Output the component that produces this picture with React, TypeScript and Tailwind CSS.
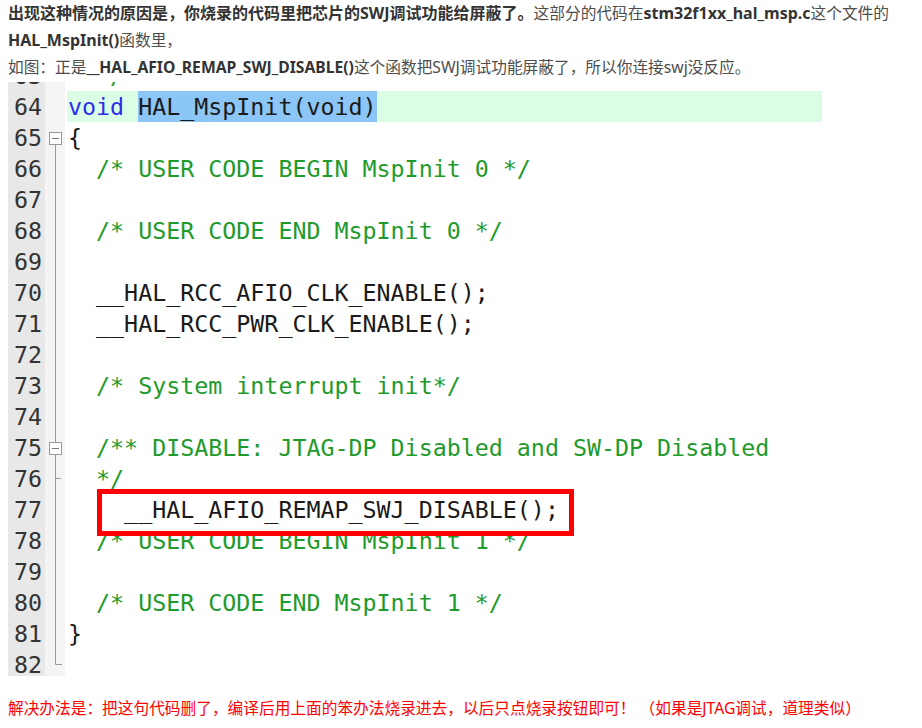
import React from "react";

type Fold = "none" | "open" | "bar" | "mid" | "tick" | "end";
type Kind = "plain" | "comment" | "sig";

const CODE: { n: number; fold: Fold; kind: Kind; text: string }[] = [
  { n: 63, fold: "none", kind: "comment", text: "  */" },
  { n: 64, fold: "none", kind: "sig", text: "" },
  { n: 65, fold: "open", kind: "plain", text: "{" },
  { n: 66, fold: "bar", kind: "comment", text: "  /* USER CODE BEGIN MspInit 0 */" },
  { n: 67, fold: "bar", kind: "plain", text: "" },
  { n: 68, fold: "bar", kind: "comment", text: "  /* USER CODE END MspInit 0 */" },
  { n: 69, fold: "bar", kind: "plain", text: "" },
  { n: 70, fold: "bar", kind: "plain", text: "  __HAL_RCC_AFIO_CLK_ENABLE();" },
  { n: 71, fold: "bar", kind: "plain", text: "  __HAL_RCC_PWR_CLK_ENABLE();" },
  { n: 72, fold: "bar", kind: "plain", text: "" },
  { n: 73, fold: "bar", kind: "comment", text: "  /* System interrupt init*/" },
  { n: 74, fold: "bar", kind: "plain", text: "" },
  { n: 75, fold: "mid", kind: "comment", text: "  /** DISABLE: JTAG-DP Disabled and SW-DP Disabled" },
  { n: 76, fold: "tick", kind: "comment", text: "  */" },
  { n: 77, fold: "bar", kind: "plain", text: "    __HAL_AFIO_REMAP_SWJ_DISABLE();" },
  { n: 78, fold: "bar", kind: "comment", text: "  /* USER CODE BEGIN MspInit 1 */" },
  { n: 79, fold: "bar", kind: "plain", text: "" },
  { n: 80, fold: "bar", kind: "comment", text: "  /* USER CODE END MspInit 1 */" },
  { n: 81, fold: "bar", kind: "plain", text: "}" },
  { n: 82, fold: "end", kind: "plain", text: "" },
];

function FoldMark({ type }: { type: Fold }) {
  const c = "#9a9a9a";
  return (
    <svg width="20" height="31" viewBox="0 0 20 31" className="block">
      {(type === "bar" || type === "tick") && <line x1="10.5" y1="0" x2="10.5" y2="31" stroke={c} />}
      {type === "tick" && <line x1="10.5" y1="15.5" x2="16" y2="15.5" stroke={c} />}
      {type === "end" && (
        <polyline points="10.5,0 10.5,15.5 17,15.5" fill="none" stroke={c} />
      )}
      {type === "open" && <line x1="10.5" y1="23" x2="10.5" y2="31" stroke={c} />}
      {type === "mid" && (
        <>
          <line x1="10.5" y1="0" x2="10.5" y2="10" stroke={c} />
          <line x1="10.5" y1="23" x2="10.5" y2="31" stroke={c} />
        </>
      )}
      {(type === "open" || type === "mid") && (
        <>
          <rect x="4.5" y="10.5" width="12" height="12" fill="#ffffff" stroke={c} />
          <line x1="7" y1="16.5" x2="14" y2="16.5" stroke="#777" />
        </>
      )}
    </svg>
  );
}

function CodeLine({ n, fold, kind, text }: { n: number; fold: Fold; kind: Kind; text: string }) {
  return (
    <div className="flex h-[31px] leading-[31px]">
      <div className="w-[37px] bg-[#e8e8e8] pr-[3px] text-right text-[#333]">{n}</div>
      <div className="w-[20px] bg-[#f4f4f4]">
        <FoldMark type={fold} />
      </div>
      <div className="w-[2px]" />
      {kind === "sig" ? (
        <div className="w-[755px] whitespace-pre bg-[#dcfde5] pl-[1px] text-[#1a1a1a]">
          <span className="text-[#2d2de8]">void</span>{" "}
          <span className="inline-block bg-[#8cc6f6]">HAL_MspInit(void)</span>
        </div>
      ) : (
        <div
          className={
            kind === "comment"
              ? "whitespace-pre pl-[1px] text-[#1f9a2c]"
              : "whitespace-pre pl-[1px] text-[#1a1a1a]"
          }
        >
          {text}
        </div>
      )}
    </div>
  );
}

export default function App() {
  return (
    <div className="h-[728px] w-[922px] overflow-hidden bg-white pl-2 font-['Noto_Sans','Noto_Sans_CJK_SC',sans-serif] text-[15.7px] leading-[27px] text-[#4d4d4d]">
      <p className="whitespace-nowrap">
        <b className="text-[16px] font-bold text-[#333]">出现这种情况的原因是，你烧录的代码里把芯片的SWJ调试功能给屏蔽了。</b>
        这部分的代码在<b className="text-[16px] font-bold text-[#333]">stm32f1xx_hal_msp.c</b>这个文件的
        <br />
        <b className="text-[16px] font-bold text-[#333]">HAL_MspInit()</b>函数里，
      </p>
      <p className="whitespace-nowrap">
        如图：正是<b className="font-bold text-[#333]">__HAL_AFIO_REMAP_SWJ_DISABLE()</b>
        这个函数把SWJ调试功能屏蔽了，所以你连接swj没反应。
      </p>

      <div className="relative mt-px h-[594px] w-[830px] overflow-hidden font-['DejaVu_Sans_Mono',monospace] text-[23.3px]">
        <div className="-mt-[22.5px] flex flex-col">
          {CODE.map((l) => (
            <CodeLine key={l.n} {...l} />
          ))}
        </div>
        <div className="absolute left-[89px] top-[407px] h-[47px] w-[477px] border-[5px] border-[#ff0000]" />
      </div>

      <p className="mt-[19px] whitespace-nowrap text-[#ff0000]">
        解决办法是：把这句代码删了，编译后用上面的笨办法烧录进去，以后只点烧录按钮即可！ （如果是JTAG调试，道理类似）
      </p>
    </div>
  );
}
